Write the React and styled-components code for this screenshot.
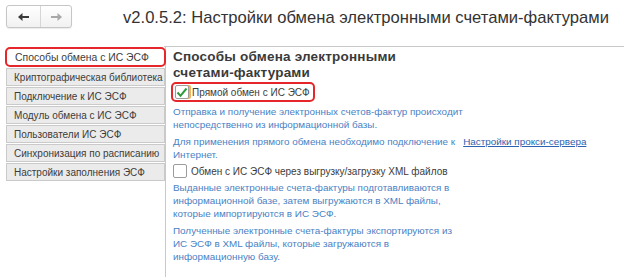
import React from "react";
import styled, { createGlobalStyle } from "styled-components";

const Global = createGlobalStyle`
  html, body { margin: 0; padding: 0; background: #ffffff; }
  body { font-family: "Liberation Sans", Arial, sans-serif; color: #333; }
  * { box-sizing: border-box; }
`;

const Page = styled.div`
  width: 624px;
  height: 277px;
  overflow: hidden;
  background: #fff;
  display: flex;
  flex-direction: column;
`;

const Header = styled.div`
  height: 46px;
  display: flex;
  align-items: flex-start;
  padding: 5px 0 0 6px;
`;

const NavGroup = styled.div`
  display: flex;
  height: 23px;
  border: 1px solid #c6c6c6;
  border-radius: 3px;
  background: linear-gradient(#ffffff, #f1f1f1);
  box-shadow: 0 1px 1px rgba(0, 0, 0, 0.08);
`;

const NavButton = styled.div`
  width: ${(p) => p.$w}px;
  display: flex;
  align-items: center;
  justify-content: center;
  border-left: ${(p) => (p.$divider ? "1px solid #d6d6d6" : "none")};
  color: ${(p) => (p.$disabled ? "#a8a8a8" : "#3a3a3a")};
`;

const Title = styled.div`
  margin-left: 51px;
  margin-top: 3px;
  font-size: 16.6px;
  color: #333;
  white-space: nowrap;
`;

const Body = styled.div`
  flex: 1;
  display: flex;
`;

const Sidebar = styled.div`
  width: 166px;
  flex-shrink: 0;
  padding: 1px 0 0 6px;
  border-right: 1px solid #c9c9c9;
  display: flex;
  flex-direction: column;
  gap: 1px;
  position: relative;
  z-index: 1;
`;

const Tab = styled.div`
  height: ${(p) => (p.$active ? 20 : 18)}px;
  margin-right: ${(p) => (p.$active ? -1 : 0)}px;
  margin-left: ${(p) => (p.$active ? -1 : 0)}px;
  display: flex;
  align-items: center;
  padding-left: ${(p) => (p.$active ? 8 : 7)}px;
  font-size: ${(p) => (p.$active ? 10.4 : 10)}px;
  color: #3c3c3c;
  white-space: nowrap;
  overflow: hidden;
  background: ${(p) => (p.$active ? "#ffffff" : "#ebebeb")};
  border: ${(p) => (p.$active ? "2px solid #e5262b" : "1px solid #cacaca")};
  border-radius: ${(p) => (p.$active ? "5px" : "0")};
`;

const Content = styled.div`
  flex: 1;
  border-top: 1px solid #c9c9c9;
  margin-left: -2px;
  padding: 2px 0 0 9px;
  display: flex;
  flex-direction: column;
  align-items: flex-start;
`;

const Heading = styled.div`
  font-size: 13.5px;
  font-weight: bold;
  line-height: 16px;
  color: #3a3a3a;
  letter-spacing: 0.2px;
`;

const CheckRow = styled.label`
  display: inline-flex;
  align-items: center;
  gap: ${(p) => (p.$marked ? 3 : 4)}px;
  height: ${(p) => (p.$marked ? 20 : 16)}px;
  margin-top: ${(p) => p.$mt}px;
  margin-left: ${(p) => (p.$marked ? -2 : 0)}px;
  padding: ${(p) => (p.$marked ? "0 3px 0 2px" : "0")};
  border: ${(p) => (p.$marked ? "2px solid #e5262b" : "none")};
  border-radius: 5px;
  font-size: 10px;
  color: #3c3c3c;
  white-space: nowrap;
`;

const Box = styled.span`
  width: 14px;
  height: 14px;
  border: 1px solid #9c9c9c;
  border-radius: 2px;
  background: #fff;
  display: flex;
  align-items: center;
  justify-content: center;
  box-shadow: ${(p) => (p.$focus ? "2px 0 0 #f0b35a" : "none")};
`;

const Note = styled.div`
  margin-top: ${(p) => p.$mt}px;
  font-size: 9.9px;
  line-height: 13px;
  color: #4a81c4;
  white-space: nowrap;
`;

const NoteRow = styled.div`
  display: flex;
  align-items: flex-start;
  margin-top: 4px;
`;

const Link = styled.a`
  margin-left: 8px;
  font-size: 9.9px;
  line-height: 13px;
  color: #2d62b0;
  text-decoration: underline;
  white-space: nowrap;
`;

const tabs = [
  "Способы обмена с ИС ЭСФ",
  "Криптографическая библиотека",
  "Подключение к ИС ЭСФ",
  "Модуль обмена с ИС ЭСФ",
  "Пользователи ИС ЭСФ",
  "Синхронизация по расписанию",
  "Настройки заполнения ЭСФ",
];

const Arrow = ({ dir, color }) => (
  <svg width="13" height="10" viewBox="0 0 13 10">
    {dir === "left" ? (
      <>
        <path d="M1 5 L5.5 1 L5.5 9 Z" fill={color} />
        <rect x="5" y="4" width="7" height="2" fill={color} />
      </>
    ) : (
      <>
        <path d="M12 5 L7.5 1 L7.5 9 Z" fill={color} />
        <rect x="1" y="4" width="7" height="2" fill={color} />
      </>
    )}
  </svg>
);

export default function App() {
  return (
    <Page>
      <Global />
      <Header>
        <NavGroup>
          <NavButton $w={33}>
            <Arrow dir="left" color="#3a3a3a" />
          </NavButton>
          <NavButton $w={31} $divider $disabled>
            <Arrow dir="right" color="#a8a8a8" />
          </NavButton>
        </NavGroup>
        <Title>v2.0.5.2: Настройки обмена электронными счетами-фактурами</Title>
      </Header>
      <Body>
        <Sidebar>
          {tabs.map((t, i) => (
            <Tab key={t} $active={i === 0}>
              {t}
            </Tab>
          ))}
        </Sidebar>
        <Content>
          <Heading>
            Способы обмена электронными
            <br />
            счетами-фактурами
          </Heading>
          <CheckRow $marked $mt={1}>
            <Box $focus>
              <svg width="12" height="11" viewBox="0 0 12 11">
                <path d="M1.5 5.5 L4.5 8.8 L10.5 1.5" stroke="#2e9a3a" strokeWidth="2" fill="none" />
              </svg>
            </Box>
            Прямой обмен с ИС ЭСФ
          </CheckRow>
          <Note $mt={3}>
            Отправка и получение электронных счетов-фактур происходит
            <br />
            непосредственно из информационной базы.
          </Note>
          <NoteRow>
            <Note $mt={0}>
              Для применения прямого обмена необходимо подключение к
              <br />
              Интернет.
            </Note>
            <Link>Настройки прокси-сервера</Link>
          </NoteRow>
          <CheckRow $mt={2}>
            <Box />
            Обмен с ИС ЭСФ через выгрузку/загрузку XML файлов
          </CheckRow>
          <Note $mt={2}>
            Выданные электронные счета-фактуры подготавливаются в
            <br />
            информационной базе, затем выгружаются в XML файлы,
            <br />
            которые импортируются в ИС ЭСФ.
          </Note>
          <Note $mt={4}>
            Полученные электронные счета-фактуры экспортируются из
            <br />
            ИС ЭСФ в XML файлы, которые загружаются в
            <br />
            информационную базу.
          </Note>
        </Content>
      </Body>
    </Page>
  );
}
